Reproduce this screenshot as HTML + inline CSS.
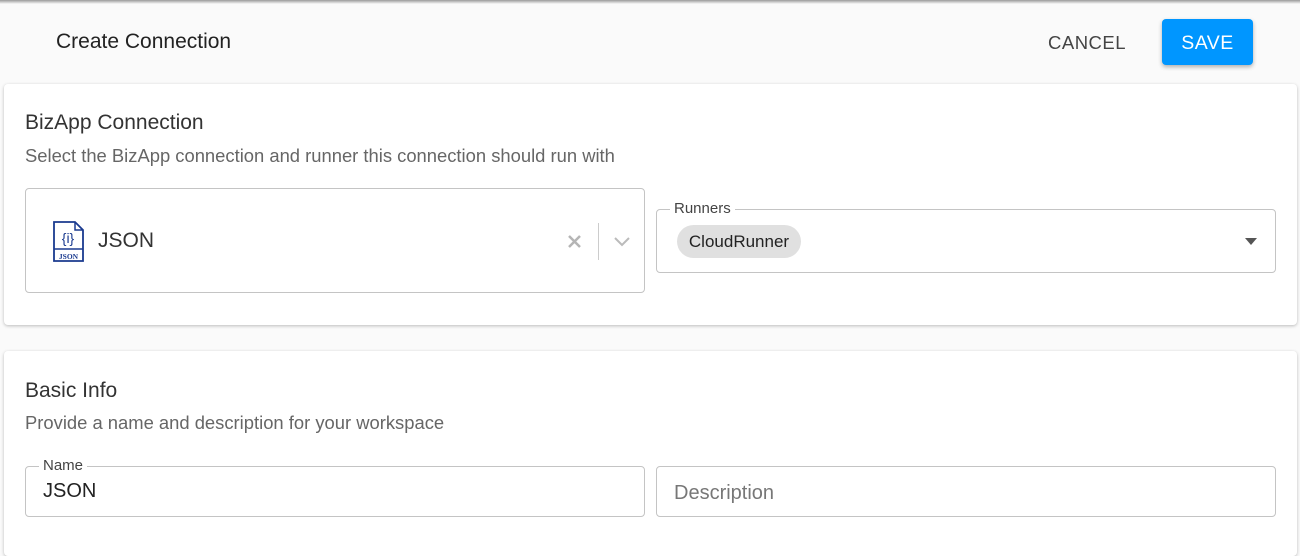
<!DOCTYPE html>
<html><head><style>
*{box-sizing:border-box;margin:0;padding:0}
body{width:1300px;height:556px;background:#fafafa;font-family:"Liberation Sans",Arial,sans-serif;position:relative;overflow:hidden}
.topsh{position:absolute;left:0;top:0;width:1300px;height:4px;background:linear-gradient(#9a9a9a,#fafafa)}
.abs{position:absolute}
.card{position:absolute;left:4px;width:1293px;background:#fff;border-radius:4px;box-shadow:0 1px 3px rgba(0,0,0,.25)}
.h{font-size:21px;color:#333}
.sub{font-size:18.4px;color:#666}
.box{position:absolute;border:1px solid #c4c4c4;border-radius:4px;background:#fff}
.lbl{position:absolute;font-size:14px;color:#444;background:#fff;padding:0 4px}
</style></head><body>
<div class="topsh"></div>
<div class="abs" style="left:56px;top:30px;font-size:21px;color:#222">Create Connection</div>
<div class="abs" style="left:1048px;top:32px;font-size:18.5px;color:#444;letter-spacing:.5px">CANCEL</div>
<div class="abs" style="left:1162px;top:19px;width:91px;height:46px;background:#0096ff;border-radius:4px;box-shadow:0 2px 4px rgba(0,0,0,.3);color:#fff;font-size:19.5px;text-align:center;line-height:48px;letter-spacing:.5px">SAVE</div>

<div class="card" style="top:84px;height:241px">
  <div class="abs h" style="left:21px;top:27px">BizApp Connection</div>
  <div class="abs sub" style="left:21px;top:61px">Select the BizApp connection and runner this connection should run with</div>
  <div class="box" style="left:21px;top:104px;width:620px;height:105px">
    <svg class="abs" style="left:26px;top:32px" width="32" height="42" viewBox="0 0 32 42">
      <path d="M2 1H23L31 9V40H2Z" fill="#fff" stroke="#1a3a8f" stroke-width="1.8"/>
      <path d="M23 1V9H31" fill="none" stroke="#1a3a8f" stroke-width="1.5"/>
      <line x1="2" y1="28" x2="31" y2="28" stroke="#1a3a8f" stroke-width="1.5"/>
      <text x="16" y="22" font-size="14" text-anchor="middle" fill="#1a3a8f" font-family="Liberation Sans">{i}</text>
      <text x="16.5" y="38" font-size="7.5" font-weight="bold" text-anchor="middle" fill="#1a3a8f" font-family="Liberation Serif">JSON</text>
    </svg>
    <div class="abs" style="left:72px;top:40px;font-size:21px;color:#333">JSON</div>
    <svg class="abs" style="left:542px;top:46px" width="13" height="13"><path d="M1 1L12 12M12 1L1 12" stroke="#b5b5b5" stroke-width="2.5"/></svg>
    <div class="abs" style="left:572px;top:34px;width:1px;height:37px;background:#ccc"></div>
    <svg class="abs" style="left:588px;top:48px" width="16" height="10"><path d="M1 1L8 8L15 1" fill="none" stroke="#bbb" stroke-width="2"/></svg>
  </div>
  <div class="box" style="left:652px;top:125px;width:620px;height:64px">
    <div class="abs" style="left:20px;top:15px;height:33px;width:124px;background:#e0e0e0;border-radius:17px;font-size:17px;color:#222;line-height:34px;text-align:center">CloudRunner</div>
    <svg class="abs" style="left:588px;top:28px" width="12" height="7"><path d="M0 0H12L6 7Z" fill="#555"/></svg>
  </div>
  <div class="lbl" style="left:666px;top:116px;font-size:15px">Runners</div>
</div>

<div class="card" style="top:351px;height:205px">
  <div class="abs h" style="left:21px;top:28px">Basic Info</div>
  <div class="abs sub" style="left:21px;top:61px">Provide a name and description for your workspace</div>
  <div class="box" style="left:21px;top:115px;width:620px;height:51px">
    <div class="abs" style="left:17px;top:13px;font-size:20px;color:#222">JSON</div>
  </div>
  <div class="lbl" style="left:35px;top:106px;font-size:15px">Name</div>
  <div class="box" style="left:652px;top:115px;width:620px;height:51px">
    <div class="abs" style="left:17px;top:15px;font-size:20px;color:#777">Description</div>
  </div>
</div>
</body></html>
